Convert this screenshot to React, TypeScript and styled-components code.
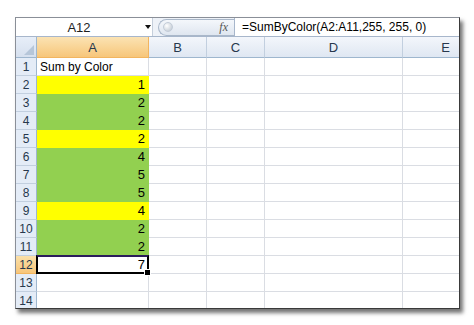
import { Fragment } from "react";
import styled, { createGlobalStyle } from "styled-components";

const GlobalStyle = createGlobalStyle`
  html, body {
    margin: 0;
    padding: 0;
    background: #ffffff;
  }
  body {
    font-family: "Liberation Sans", Arial, sans-serif;
  }
`;

const Page = styled.div`
  width: 474px;
  height: 325px;
  padding: 17px 0 0 15px;
  box-sizing: border-box;
  overflow: hidden;
`;

const Window = styled.div`
  width: 445px;
  height: 292px;
  box-sizing: border-box;
  border: 1px solid #8a8f98;
  border-right-color: #3a3a3a;
  border-bottom-color: #3a3a3a;
  box-shadow: 3px 4px 4px rgba(0, 0, 0, 0.55);
  background: #ffffff;
  display: flex;
  flex-direction: column;
  overflow: hidden;
`;

const FormulaBar = styled.div`
  display: flex;
  height: 18px;
  border-bottom: 1px solid #a7b6cb;
  background: #f2f5fa;
  flex-shrink: 0;
`;

const NameBox = styled.div`
  position: relative;
  width: 137px;
  display: flex;
  align-items: center;
  justify-content: center;
  background: #ffffff;
  border-right: 1px solid #c5cfdc;
  font-size: 13px;
  color: #1e1e1e;
  padding-right: 10px;
  box-sizing: border-box;
`;

const DropArrow = styled.span`
  position: absolute;
  right: 1px;
  top: 7px;
  width: 0;
  height: 0;
  border-left: 3px solid transparent;
  border-right: 3px solid transparent;
  border-top: 4px solid #111;
`;

const Splitter = styled.div`
  width: 81px;
  display: flex;
  align-items: center;
  padding-left: 5px;
  box-sizing: border-box;
  background: #eef2f8;
`;

const Pill = styled.div`
  flex: 1;
  height: 17px;
  border: 1px solid #a9b7c9;
  border-right: none;
  border-radius: 9px 0 0 9px;
  background: linear-gradient(#f4f7fb, #dfe6f0);
  display: flex;
  align-items: center;
  justify-content: space-between;
  padding: 0 6px 0 4px;
  box-sizing: border-box;
`;

const Knob = styled.span`
  width: 8px;
  height: 8px;
  border-radius: 50%;
  background: radial-gradient(circle at 35% 35%, #ffffff, #b7c1cd);
  border: 1px solid #c3ccd8;
`;

const Fx = styled.span`
  font-family: "Liberation Serif", "Times New Roman", serif;
  font-style: italic;
  font-size: 12px;
  color: #555;
`;

const FormulaInput = styled.div`
  flex: 1;
  display: flex;
  align-items: center;
  padding-left: 7px;
  background: #ffffff;
  border-left: 1px solid #a7b6cb;
  font-size: 12px;
  color: #000;
  white-space: nowrap;
`;

const Sheet = styled.div`
  display: grid;
  grid-template-columns: 21px 112px 58px 58px 138px 60px;
  grid-template-rows: 21px repeat(14, 18px);
  color: #000;
`;

const Corner = styled.div`
  background: linear-gradient(#e7eef8, #d6e0ee);
  border-right: 1px solid #9eb6ce;
  border-bottom: 1px solid #9eb6ce;
  position: relative;
  &::after {
    content: "";
    position: absolute;
    right: 2px;
    bottom: 2px;
    width: 0;
    height: 0;
    border-left: 10px solid transparent;
    border-bottom: 10px solid #b6c6d9;
  }
`;

const ColHead = styled.div<{ $active?: boolean; $align?: string }>`
  display: flex;
  align-items: center;
  justify-content: ${(p) => p.$align || "center"};
  padding-right: ${(p) => (p.$align ? "12px" : "0")};
  background: ${(p) =>
    p.$active
      ? "linear-gradient(#fbe3b3, #f7c67a)"
      : "linear-gradient(#f3f6fb, #dfe7f2)"};
  border-right: 1px solid ${(p) => (p.$active ? "#f2b55f" : "#c2cfdf")};
  border-bottom: 1px solid ${(p) => (p.$active ? "#f2b55f" : "#9eb6ce")};
  color: #27384d;
  font-size: 13px;
`;

const RowHead = styled.div<{ $active?: boolean }>`
  display: flex;
  align-items: center;
  justify-content: center;
  background: ${(p) =>
    p.$active ? "linear-gradient(#fbe0a9, #f7c67a)" : "#e4ecf7"};
  border-right: 1px solid ${(p) => (p.$active ? "#f2b55f" : "#9eb6ce")};
  border-bottom: 1px solid ${(p) => (p.$active ? "#f2b55f" : "#c2cfdf")};
  color: #27384d;
  font-size: 12px;
`;

const Cell = styled.div<{ $fill?: string; $right?: boolean }>`
  display: flex;
  align-items: center;
  justify-content: ${(p) => (p.$right ? "flex-end" : "flex-start")};
  padding: 0 3px;
  background: ${(p) => p.$fill || "#ffffff"};
  border-right: 1px solid ${(p) => (p.$fill ? "transparent" : "#dadde3")};
  border-bottom: 1px solid ${(p) => (p.$fill ? "transparent" : "#dadde3")};
  white-space: nowrap;
  font-size: 13px;
`;

const TextCell = styled(Cell)`
  font-size: 12px;
`;

const ActiveCell = styled(Cell)`
  position: relative;
  border: 2px solid #000;
  border-top-color: #2b1d5c;
  margin: -1px 0 0 -1px;
  padding-right: 2px;
  &::after {
    content: "";
    position: absolute;
    right: -4px;
    bottom: -4px;
    width: 5px;
    height: 5px;
    background: #000;
    border: 1px solid #fff;
  }
`;

const YELLOW = "#ffff00";
const GREEN = "#92d050";

const data: { value: number; fill: string }[] = [
  { value: 1, fill: YELLOW },
  { value: 2, fill: GREEN },
  { value: 2, fill: GREEN },
  { value: 2, fill: YELLOW },
  { value: 4, fill: GREEN },
  { value: 5, fill: GREEN },
  { value: 5, fill: GREEN },
  { value: 4, fill: YELLOW },
  { value: 2, fill: GREEN },
  { value: 2, fill: GREEN },
];

const emptyCols = [0, 1, 2, 3];

export default function App() {
  return (
    <>
      <GlobalStyle />
      <Page>
        <Window>
          <FormulaBar>
            <NameBox>
              A12
              <DropArrow />
            </NameBox>
            <Splitter>
              <Pill>
                <Knob />
                <Fx>fx</Fx>
              </Pill>
            </Splitter>
            <FormulaInput>=SumByColor(A2:A11,255, 255, 0)</FormulaInput>
          </FormulaBar>
          <Sheet>
            <Corner />
            <ColHead $active>A</ColHead>
            <ColHead>B</ColHead>
            <ColHead>C</ColHead>
            <ColHead>D</ColHead>
            <ColHead $align="flex-end">E</ColHead>

            <RowHead>1</RowHead>
            <TextCell>Sum by Color</TextCell>
            {emptyCols.map((c) => (
              <Cell key={c} />
            ))}

            {data.map((row, i) => (
              <Fragment key={i}>
                <RowHead>{i + 2}</RowHead>
                <Cell $fill={row.fill} $right>
                  {row.value}
                </Cell>
                {emptyCols.map((c) => (
                  <Cell key={c} />
                ))}
              </Fragment>
            ))}

            <RowHead $active>12</RowHead>
            <ActiveCell $right>7</ActiveCell>
            {emptyCols.map((c) => (
              <Cell key={`r12-${c}`} />
            ))}

            {[13, 14].map((n) => (
              <Fragment key={n}>
                <RowHead>{n}</RowHead>
                <Cell />
                {emptyCols.map((c) => (
                  <Cell key={c} />
                ))}
              </Fragment>
            ))}
          </Sheet>
        </Window>
      </Page>
    </>
  );
}
